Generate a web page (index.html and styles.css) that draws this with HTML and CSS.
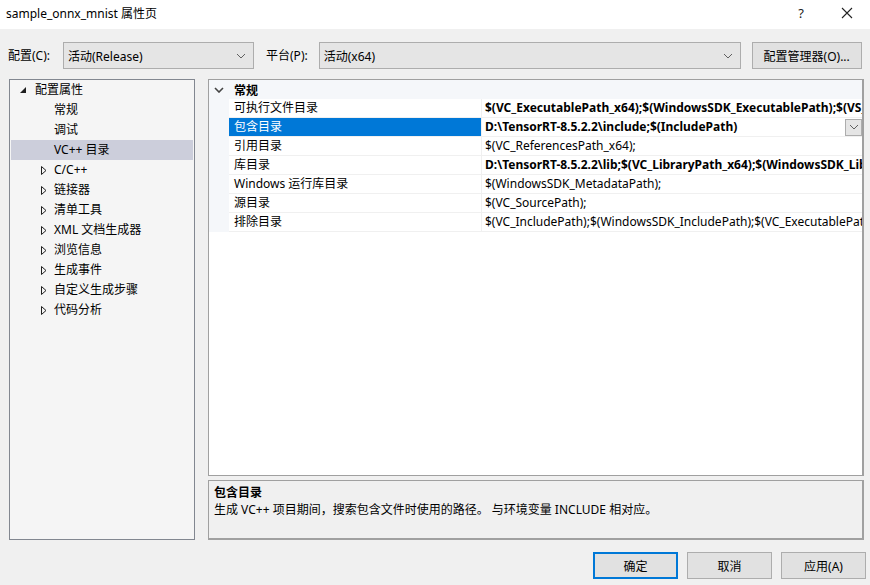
FILE: index.html
```html
<!DOCTYPE html>
<html lang="zh-CN">
<head>
  <meta charset="UTF-8">
  <title>sample_onnx_mnist 属性页</title>
  <link rel="stylesheet" href="styles.css">
</head>
<body>

  <!-- Title Bar -->
  <div class="titlebar">
    <div class="title">sample_onnx_mnist 属性页</div>
    <div class="title-btn help">?</div>
    <div class="title-btn close">
      <svg width="12" height="12" viewBox="0 0 12 12"><path d="M1 1 L11 11 M11 1 L1 11" stroke="#222" stroke-width="1.1" fill="none"/></svg>
    </div>
  </div>

  <!-- Config Row -->
  <div class="toolbar">
    <span class="label">配置(C):</span>
    <div class="combo combo-config">
      <span>活动(Release)</span>
      <svg class="chev" width="10" height="6" viewBox="0 0 10 6"><polyline points="1,1 5,5 9,1" stroke="#606060" fill="none"/></svg>
    </div>
    <span class="label label-platform">平台(P):</span>
    <div class="combo combo-platform">
      <span>活动(x64)</span>
      <svg class="chev" width="10" height="6" viewBox="0 0 10 6"><polyline points="1,1 5,5 9,1" stroke="#606060" fill="none"/></svg>
    </div>
    <button class="btn btn-manager">配置管理器(O)...</button>
  </div>

  <div class="main">
    <!-- Tree -->
    <div class="tree">
      <div class="node root">
        <svg class="arrow" width="7" height="7" viewBox="0 0 7 7"><polygon points="6,0 6,6 0,6" fill="#1e1e1e"/></svg>
        <span>配置属性</span>
      </div>
      <div class="node leaf">常规</div>
      <div class="node leaf">调试</div>
      <div class="node leaf selected">VC++ 目录</div>
      <div class="node branch"><svg class="arrow" width="6" height="9" viewBox="0 0 6 9"><polygon points="0.5,0.5 5,4.5 0.5,8.5" fill="none" stroke="#1e1e1e"/></svg><span>C/C++</span></div>
      <div class="node branch"><svg class="arrow" width="6" height="9" viewBox="0 0 6 9"><polygon points="0.5,0.5 5,4.5 0.5,8.5" fill="none" stroke="#1e1e1e"/></svg><span>链接器</span></div>
      <div class="node branch"><svg class="arrow" width="6" height="9" viewBox="0 0 6 9"><polygon points="0.5,0.5 5,4.5 0.5,8.5" fill="none" stroke="#1e1e1e"/></svg><span>清单工具</span></div>
      <div class="node branch"><svg class="arrow" width="6" height="9" viewBox="0 0 6 9"><polygon points="0.5,0.5 5,4.5 0.5,8.5" fill="none" stroke="#1e1e1e"/></svg><span>XML 文档生成器</span></div>
      <div class="node branch"><svg class="arrow" width="6" height="9" viewBox="0 0 6 9"><polygon points="0.5,0.5 5,4.5 0.5,8.5" fill="none" stroke="#1e1e1e"/></svg><span>浏览信息</span></div>
      <div class="node branch"><svg class="arrow" width="6" height="9" viewBox="0 0 6 9"><polygon points="0.5,0.5 5,4.5 0.5,8.5" fill="none" stroke="#1e1e1e"/></svg><span>生成事件</span></div>
      <div class="node branch"><svg class="arrow" width="6" height="9" viewBox="0 0 6 9"><polygon points="0.5,0.5 5,4.5 0.5,8.5" fill="none" stroke="#1e1e1e"/></svg><span>自定义生成步骤</span></div>
      <div class="node branch"><svg class="arrow" width="6" height="9" viewBox="0 0 6 9"><polygon points="0.5,0.5 5,4.5 0.5,8.5" fill="none" stroke="#1e1e1e"/></svg><span>代码分析</span></div>
    </div>

    <div class="right">
      <!-- Property Grid -->
      <div class="grid">
        <div class="group-head">
          <svg class="group-chev" width="10" height="6" viewBox="0 0 10 6"><polyline points="1,1 5,5 9,1" stroke="#444" stroke-width="1.6" fill="none"/></svg>
          <span>常规</span>
        </div>
        <div class="prop">
          <div class="gutter"></div>
          <div class="name">可执行文件目录</div>
          <div class="value bold">$(VC_ExecutablePath_x64);$(WindowsSDK_ExecutablePath);$(VS_ExecutablePath);$(MSBuild_ExecutablePath)</div>
        </div>
        <div class="prop active">
          <div class="gutter"></div>
          <div class="name">包含目录</div>
          <div class="value bold">
            <span class="value-text">D:\TensorRT-8.5.2.2\include;$(IncludePath)</span>
            <span class="drop">
              <svg width="10" height="6" viewBox="0 0 10 6"><polyline points="1,1 5,5 9,1" stroke="#606060" fill="none"/></svg>
            </span>
          </div>
        </div>
        <div class="prop">
          <div class="gutter"></div>
          <div class="name">引用目录</div>
          <div class="value">$(VC_ReferencesPath_x64);</div>
        </div>
        <div class="prop">
          <div class="gutter"></div>
          <div class="name">库目录</div>
          <div class="value bold">D:\TensorRT-8.5.2.2\lib;$(VC_LibraryPath_x64);$(WindowsSDK_LibraryPath_x64)</div>
        </div>
        <div class="prop">
          <div class="gutter"></div>
          <div class="name">Windows 运行库目录</div>
          <div class="value">$(WindowsSDK_MetadataPath);</div>
        </div>
        <div class="prop">
          <div class="gutter"></div>
          <div class="name">源目录</div>
          <div class="value">$(VC_SourcePath);</div>
        </div>
        <div class="prop">
          <div class="gutter"></div>
          <div class="name">排除目录</div>
          <div class="value">$(VC_IncludePath);$(WindowsSDK_IncludePath);$(VC_ExecutablePath_x64)</div>
        </div>
      </div>

      <!-- Description -->
      <div class="desc">
        <div class="desc-title">包含目录</div>
        <div class="desc-text">生成 VC++ 项目期间，搜索包含文件时使用的路径。 与环境变量 INCLUDE 相对应。</div>
      </div>
    </div>
  </div>

  <!-- Footer Buttons -->
  <div class="footer">
    <button class="btn btn-foot default">确定</button>
    <button class="btn btn-foot">取消</button>
    <button class="btn btn-foot">应用(A)</button>
  </div>

</body>
</html>
```

FILE: styles.css
```css
body {
  margin: 0;
  width: 870px;
  height: 585px;
  overflow: hidden;
  background-color: #f0f0f0;
  color: #000;
  font-family: "Noto Sans", "Noto Sans CJK SC", sans-serif;
  font-size: 12px;
}
/* Title Bar */
.titlebar {
  height: 29px;
  background-color: #fff;
  display: flex;
  align-items: center;
}
.title {
  flex: 1;
  padding-left: 6px;
  padding-bottom: 3px;
  font-size: 12px;
}
.title-btn {
  width: 46px;
  height: 29px;
  display: flex;
  align-items: center;
  justify-content: center;
  padding-bottom: 4px;
  box-sizing: border-box;
}
.help {
  font-size: 13px;
  color: #222;
}
/* Config Row */
.toolbar {
  display: flex;
  align-items: center;
  margin-top: 13px;
  padding-left: 8px;
  height: 27px;
}
.label {
  line-height: 16px;
}
.combo {
  height: 27px;
  box-sizing: border-box;
  background-color: #e5e5e5;
  border: 1px solid #adadad;
  display: flex;
  align-items: center;
  justify-content: space-between;
  padding: 0 7px 0 4px;
}
.combo-config {
  width: 191px;
  margin-left: 13px;
}
.label-platform {
  margin-left: 12px;
}
.combo-platform {
  width: 422px;
  margin-left: 11px;
}
.btn {
  font-family: "Noto Sans", "Noto Sans CJK SC", sans-serif;
  font-size: 12px;
  color: #000;
  background-color: #e1e1e1;
  border: 1px solid #adadad;
  padding: 0;
  box-sizing: border-box;
}
.btn-manager {
  width: 110px;
  height: 27px;
  margin-left: 11px;
}
/* Main Area */
.main {
  display: flex;
  margin-top: 10px;
  padding-left: 9px;
  height: 461px;
}
.tree {
  width: 186px;
  box-sizing: border-box;
  border: 1px solid #828790;
  background-color: #f5f5f5;
  padding: 0 1px;
}
.node {
  height: 20px;
  line-height: 20px;
  display: flex;
  align-items: center;
  white-space: nowrap;
}
.node .arrow {
  flex-shrink: 0;
}
.root {
  padding-left: 9px;
}
.root span {
  margin-left: 8px;
}
.leaf {
  padding-left: 43px;
}
.branch {
  padding-left: 30px;
}
.branch span {
  margin-left: 7px;
}
.selected {
  background-color: #cccedb;
}
.right {
  margin-left: 13px;
  width: 656px;
  display: flex;
  flex-direction: column;
}
/* Property Grid */
.grid {
  height: 399px;
  box-sizing: border-box;
  border: 1px solid #a0a0a0;
  border-right-width: 2px;
  background-color: #fff;
  overflow: hidden;
}
.group-head {
  height: 19px;
  background-color: #f5f7fa;
  display: flex;
  align-items: center;
  font-weight: bold;
}
.group-chev {
  margin-left: 5px;
  margin-right: 10px;
}
.prop {
  display: flex;
  height: 19px;
  line-height: 18px;
  white-space: nowrap;
}
.gutter {
  width: 20px;
  flex-shrink: 0;
  background-color: #f5f7fa;
}
.name {
  width: 253px;
  flex-shrink: 0;
  padding-left: 5px;
  box-sizing: border-box;
  border-bottom: 1px solid #f0f0f0;
  border-right: 1px solid #f0f0f0;
}
.value {
  flex: 1;
  padding-left: 3px;
  overflow: hidden;
  border-bottom: 1px solid #f0f0f0;
  display: flex;
  align-items: center;
}
.bold {
  font-weight: bold;
}
.active .name {
  background-color: #0078d7;
  color: #fff;
}
.value-text {
  flex: 1;
}
.drop {
  width: 17px;
  height: 17px;
  box-sizing: border-box;
  background-color: #e5e5e5;
  border: 1px solid #adadad;
  display: flex;
  align-items: center;
  justify-content: center;
  flex-shrink: 0;
}
/* Description */
.desc {
  margin-top: 4px;
  height: 60px;
  box-sizing: border-box;
  border: 1px solid #a0a0a0;
  border-right-width: 2px;
  border-bottom-width: 2px;
  padding: 3px 5px;
  line-height: 17px;
}
.desc-title {
  font-weight: bold;
}
/* Footer */
.footer {
  display: flex;
  justify-content: flex-end;
  padding-right: 4px;
  margin-top: 12px;
  gap: 9px;
}
.btn-foot {
  width: 85px;
  height: 27px;
}
.btn-foot.default {
  border: 2px solid #0078d7;
}
```
